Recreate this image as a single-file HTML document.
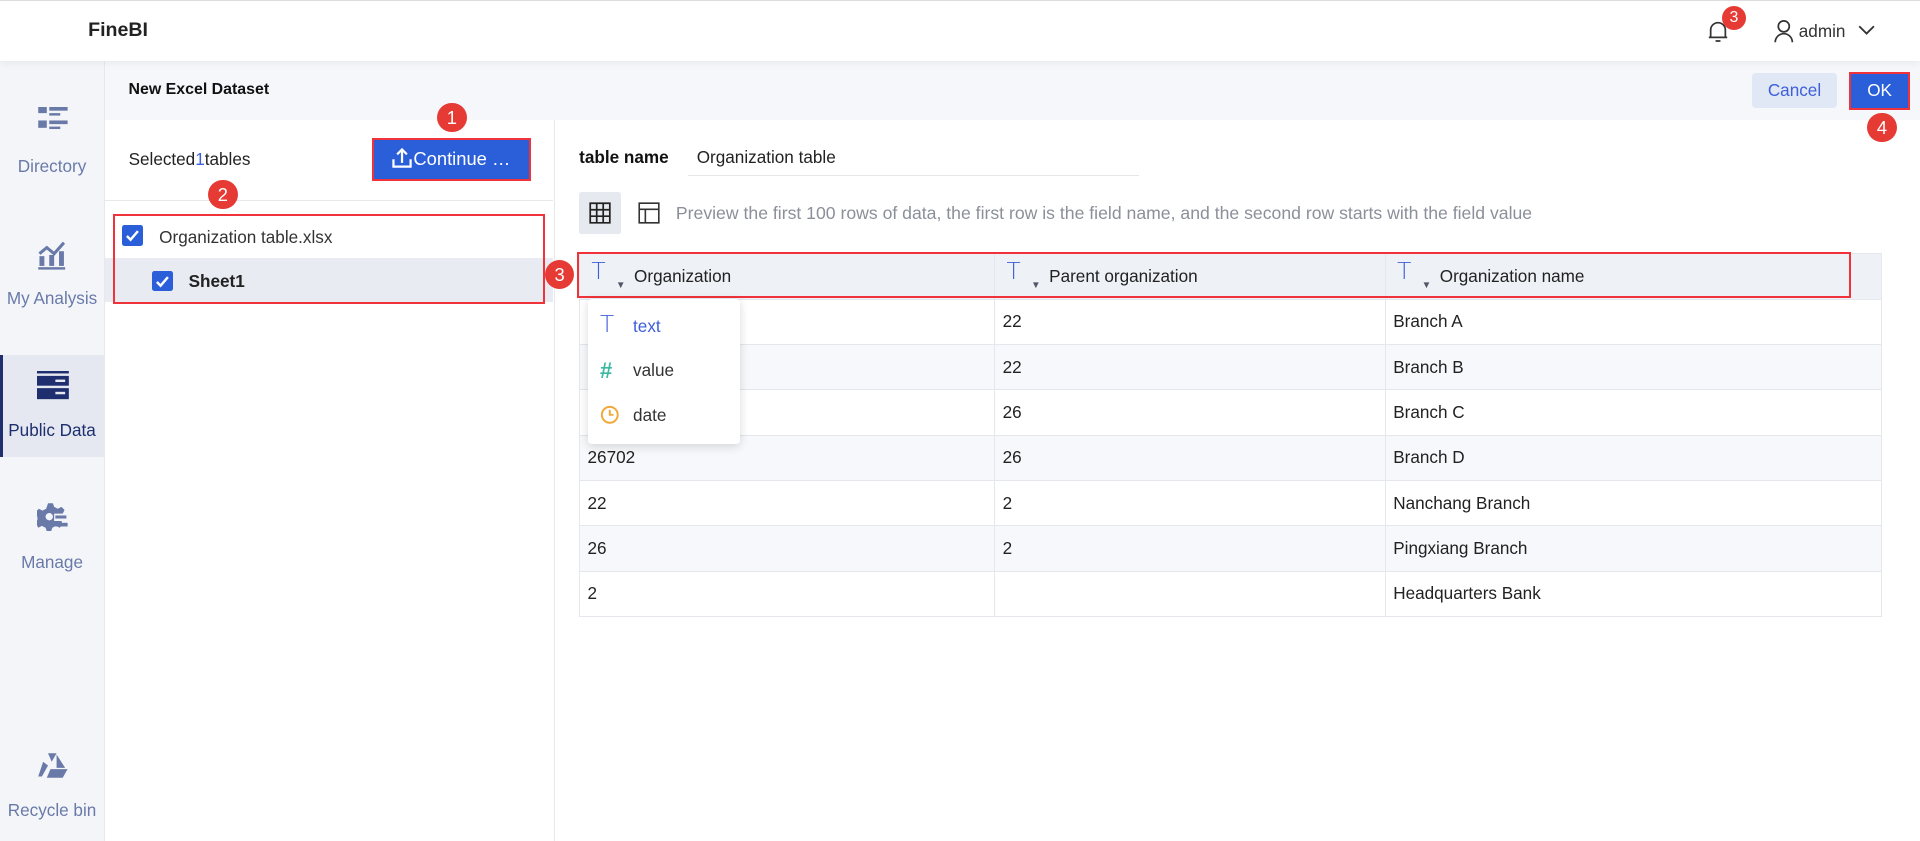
<!DOCTYPE html>
<html><head><meta charset="utf-8"><style>
*{box-sizing:border-box;margin:0;padding:0}
html,body{width:1920px;height:841px;overflow:hidden;background:#fff}
#w{zoom:1.22449;width:1568px;height:687px;position:relative;font-family:"Liberation Sans",sans-serif;color:#222;font-size:14px}
.a{position:absolute}
.top{left:0;top:0;width:1568px;height:50px;background:#fff;box-shadow:0 2px 6px rgba(0,0,0,.06);z-index:2;border-top:1px solid #ddd}
.side{left:0;top:50px;width:86px;height:637px;background:#f3f5f9;border-right:1px solid #e6e8ee}
.si{position:absolute;left:0;width:85px;text-align:center;color:#6a7aa8;font-size:14px}
.hdr{left:86px;top:50px;width:1482px;height:48px;background:#f5f7fb}
.badge{width:24px;height:24px;border-radius:50%;background:#e63a35;color:#fff;text-align:center;line-height:24px;font-size:15px;z-index:5}
.rb{border:2px solid #f0333a}
.cb{width:17px;height:17px;background:#2b5fd9;border-radius:2px}
td{border:1px solid #e4e7ec;height:37px;padding:0 6px;font-size:14px}
table{border-collapse:collapse;table-layout:fixed}
.T{position:absolute;color:#3d5fd9;font-size:19px;font-family:"DejaVu Sans",sans-serif;font-weight:200}
</style></head><body><div id="w">
<div class="a top"><div class="a" style="left:72px;top:15px;font-weight:bold;font-size:16px">FineBI</div>
<svg class="a" style="left:1394px;top:15px" width="18" height="20" viewBox="0 0 18 20"><path d="M3 15V9a6 6 0 0 1 12 0v6M1.5 15h15M7 18h4" fill="none" stroke="#333" stroke-width="1.4"/></svg>
<div class="a badge" style="left:1406px;top:4px;width:20px;height:20px;line-height:20px;font-size:13px">3</div>
<svg class="a" style="left:1449px;top:15px" width="16" height="20" viewBox="0 0 16 20"><circle cx="8" cy="6" r="4.5" fill="none" stroke="#333" stroke-width="1.4"/><path d="M1 19a7 7 0 0 1 14 0" fill="none" stroke="#333" stroke-width="1.4"/></svg>
<div class="a" style="left:1469px;top:16px;font-size:14px;color:#333">admin</div>
<svg class="a" style="left:1517px;top:20px" width="14" height="9"><path d="M1 1l6 6 6-6" fill="none" stroke="#333" stroke-width="1.5"/></svg>
</div>
<div class="a side">
<svg class="a" style="left:30px;top:37px" width="26" height="24"><rect x="1" y="0" width="7" height="5" fill="#6a7aa8"/><rect x="10" y="0" width="15" height="3" fill="#6a7aa8"/><rect x="10" y="5" width="9" height="2" fill="#6a7aa8"/><rect x="1" y="11" width="7" height="6" fill="#6a7aa8"/><rect x="10" y="11" width="15" height="3" fill="#6a7aa8"/><rect x="10" y="16" width="9" height="2" fill="#6a7aa8"/></svg>
<div class="si" style="top:77px">Directory</div>
<svg class="a" style="left:30px;top:145px" width="26" height="26"><path d="M2 12l6-5 6 5 8-9" fill="none" stroke="#6a7aa8" stroke-width="2.5"/><rect x="2" y="14" width="4" height="8" fill="#6a7aa8"/><rect x="10" y="13" width="4" height="9" fill="#6a7aa8"/><rect x="18" y="10" width="4" height="12" fill="#6a7aa8"/><rect x="1" y="23" width="22" height="2" fill="#6a7aa8"/></svg>
<div class="si" style="top:185px">My Analysis</div>
<div class="a" style="left:0;top:240px;width:85px;height:83px;background:#e5e8f0;border-left:3px solid #1e2e6e"></div>
<svg class="a" style="left:30px;top:253px" width="26" height="24"><rect x="0" y="0" width="26" height="2" fill="#1e2e6e"/><rect x="0" y="4" width="26" height="8" fill="#1e2e6e"/><rect x="0" y="14" width="26" height="9" fill="#1e2e6e"/><rect x="15" y="7" width="8" height="2" fill="#e5e8f0"/><rect x="15" y="17" width="8" height="2" fill="#e5e8f0"/></svg>
<div class="si" style="top:293px;color:#1e2e6e">Public Data</div>
<svg class="a" style="left:30px;top:360px" width="26" height="24" viewBox="0 0 26 24"><path d="M9 1h4l1 3 3 1.5 3-1.5 2.5 2.5-1.5 3H14v6h6l1 3-2.5 2.5-3-1.5-3 1.5-1 3H8l-1-3-3-1.5-3 1.5L-1 17l1.5-3L0 11l-1-3L1.5 5.5l3 1.5 3-1.5z" fill="#6a7aa8"/><circle cx="10" cy="12" r="3" fill="#f3f5f9"/><rect x="15" y="11" width="9" height="2.5" fill="#6a7aa8"/><rect x="15" y="17" width="10" height="3" fill="#6a7aa8"/></svg>
<div class="si" style="top:401px">Manage</div>
<svg class="a" style="left:30px;top:564px" width="26" height="22"><path d="M9 1h7l-4 7zM5 8l4 3-5 9H1zM11 14h14l-4 7H8z" fill="#6a7aa8"/><path d="M16 2l7 11h-7z" fill="#6a7aa8"/></svg>
<div class="si" style="top:603px">Recycle bin</div>
</div>
<div class="a hdr"><div class="a" style="left:19px;top:16px;font-weight:bold;font-size:13px;color:#111">New Excel Dataset</div>
<div class="a" style="left:1345px;top:10px;width:69px;height:28px;background:#e1e8f5;border-radius:3px;color:#3d5fd9;text-align:center;line-height:28px">Cancel</div>
<div class="a rb" style="left:1424px;top:9px;width:50px;height:31px;background:#2b5fd9;color:#fff;text-align:center;line-height:27px">OK</div>
</div>
<div class="a" style="left:86px;top:98px;width:367px;height:589px;border-right:1px solid #e8e8e8;background:#fff"></div>
<div class="a" style="left:105px;top:122px">Selected<span style="color:#3d5fd9">1</span>tables</div>
<div class="a rb" style="left:304px;top:113px;width:130px;height:35px;background:#2b5fd9;color:#fff;line-height:31px;font-size:15px;padding-left:14px">
<svg style="vertical-align:-3px" width="18" height="18"><path d="M9 13V2M5 6l4-4 4 4M2 10v6h14v-6" fill="none" stroke="#fff" stroke-width="1.8"/></svg>Continue …</div>
<div class="a" style="left:86px;top:163px;width:366px;height:1px;background:#e6e8ec"></div>
<div class="a" style="left:86px;top:211px;width:366px;height:36px;background:#e8ebf2"></div>
<div class="a rb" style="left:92px;top:175px;width:353px;height:73px"></div>
<div class="a cb" style="left:100px;top:184px"><svg width="17" height="17"><path d="M4 9l3 3 6-7" fill="none" stroke="#fff" stroke-width="2"/></svg></div>
<div class="a" style="left:130px;top:185px;color:#333">Organization table.xlsx</div>
<div class="a cb" style="left:124px;top:221px"><svg width="17" height="17"><path d="M4 9l3 3 6-7" fill="none" stroke="#fff" stroke-width="2"/></svg></div>
<div class="a" style="left:154px;top:221px;font-weight:bold">Sheet1</div>
<div class="a" style="left:473px;top:120px;font-weight:bold;color:#111">table name</div>
<div class="a" style="left:569px;top:120px;color:#222">Organization table</div>
<div class="a" style="left:562px;top:143px;width:368px;height:1px;background:#e4e6ea"></div>
<div class="a" style="left:473px;top:157px;width:34px;height:34px;background:#e6e9ef;border-radius:2px"></div>
<svg class="a" style="left:481px;top:165px" width="18" height="18"><path d="M1 1h16v16H1zM1 6.3h16M1 11.6h16M6.3 1v16M11.6 1v16" fill="none" stroke="#222" stroke-width="1.4"/></svg>
<svg class="a" style="left:521px;top:165px" width="18" height="18"><path d="M1 1h16v16H1zM1 6h16M6 6v11" fill="none" stroke="#333" stroke-width="1.3"/></svg>
<div class="a" style="left:552px;top:166px;color:#8a8f99;font-size:14.4px">Preview the first 100 rows of data, the first row is the field name, and the second row starts with the field value</div>
<table class="a" style="left:473px;top:207px;width:1063px">
<colgroup><col style="width:339px"><col style="width:319px"><col style="width:405px"></colgroup>
<tr style="background:#eef1f6"><td style="padding-left:44px">Organization</td><td style="padding-left:44px">Parent organization</td><td style="padding-left:44px">Organization name</td></tr>
<tr><td></td><td>22</td><td>Branch A</td></tr>
<tr style="background:#f6f8fb"><td></td><td>22</td><td>Branch B</td></tr>
<tr><td></td><td>26</td><td>Branch C</td></tr>
<tr style="background:#f6f8fb"><td>26702</td><td>26</td><td>Branch D</td></tr>
<tr><td>22</td><td>2</td><td>Nanchang Branch</td></tr>
<tr style="background:#f6f8fb"><td>26</td><td>2</td><td>Pingxiang Branch</td></tr>
<tr><td>2</td><td></td><td>Headquarters Bank</td></tr>
</table>
<div class="T" style="left:483px;top:211px">T</div><div class="a" style="left:503px;top:229px;font-size:8px;color:#556">▼</div>
<div class="T" style="left:822px;top:211px">T</div><div class="a" style="left:842px;top:229px;font-size:8px;color:#556">▼</div>
<div class="T" style="left:1141px;top:211px">T</div><div class="a" style="left:1161px;top:229px;font-size:8px;color:#556">▼</div>
<div class="a rb" style="left:471px;top:206px;width:1041px;height:37px"></div>
<div class="a" style="left:480px;top:244px;width:124px;height:119px;background:#fff;box-shadow:0 2px 8px rgba(0,0,0,.15);border-radius:3px"></div>
<div class="T" style="left:490px;top:254px">T</div><div class="a" style="left:517px;top:258px;color:#3d5fd9">text</div>
<div class="a" style="left:490px;top:292px;color:#3bb8a2;font-size:18px;font-weight:bold">#</div><div class="a" style="left:517px;top:294px;color:#333">value</div>
<svg class="a" style="left:490px;top:331px" width="16" height="16"><circle cx="8" cy="8" r="6.5" fill="none" stroke="#f0a93a" stroke-width="1.6"/><path d="M8 4v4h3" fill="none" stroke="#f0a93a" stroke-width="1.6"/></svg>
<div class="a" style="left:517px;top:331px;color:#333">date</div>
<div class="a badge" style="left:357px;top:84px">1</div>
<div class="a badge" style="left:170px;top:147px">2</div>
<div class="a badge" style="left:445px;top:212px">3</div>
<div class="a badge" style="left:1525px;top:92px">4</div>
</div></body></html>
